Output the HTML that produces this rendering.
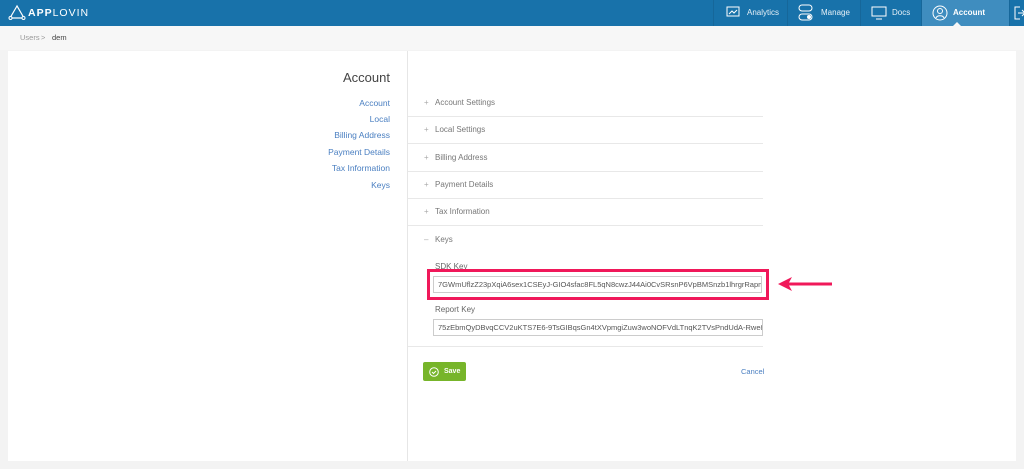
<!DOCTYPE html>
<html><head><style>
*{margin:0;padding:0;box-sizing:border-box}
body{width:1024px;height:469px;background:#f3f3f3;font-family:"Liberation Sans",sans-serif;position:relative;overflow:hidden}
.hdr{position:absolute;left:0;top:0;width:1024px;height:26px;background:#1872aa}
.logo{position:absolute;left:28px;top:7px;color:#fff;font-size:10.5px;font-weight:bold;letter-spacing:1px}
.tab{position:absolute;top:0;height:26px;color:#e6f0f7;font-size:8px;line-height:26px;border-left:1px solid #16679a}
.tab svg{position:absolute;top:6px}
.bc{position:absolute;top:26px;left:0;width:1024px;height:24px;background:#f7f7f7;font-size:7.5px;line-height:24px;color:#999}
.card{position:absolute;left:8px;top:51px;width:1008px;height:410px;background:#fff}
.vl{position:absolute;left:407px;top:51px;width:1px;height:410px;background:#e6e6e6}
.t{position:absolute;right:634px;top:70px;font-size:13px;color:#444}
.lk{position:absolute;right:634px;font-size:8.5px;color:#4a7fc1}
.row{position:absolute;left:424px;font-size:8px;color:#777}
.row b{font-weight:normal;color:#aaa;display:inline-block;width:11px}
.dv{position:absolute;left:408px;width:355px;height:1px;background:#e8e8e8}
.lab{position:absolute;left:435px;font-size:8px;color:#666}
.inp{position:absolute;left:433px;width:330px;height:17px;border:1px solid #ccc;font-size:7.5px;line-height:15px;padding-left:4px;color:#555;overflow:hidden;white-space:nowrap}
</style></head><body>
<div class="hdr">
 <svg style="position:absolute;left:8px;top:4px" width="18" height="17" viewBox="0 0 18 17"><path d="M9 2L2 14H16Z" fill="none" stroke="#fff" stroke-width="1.2"/><circle cx="2.5" cy="14" r="1.5" fill="#1872aa" stroke="#fff"/><circle cx="15.5" cy="14" r="1.5" fill="#1872aa" stroke="#fff"/></svg>
 <div class="logo">APP<span style="font-weight:normal">LOVIN</span></div>
 <div class="tab" style="left:713px;width:74px"><svg style="left:12px" width="14" height="13"><rect x="1" y="1" width="12" height="9" fill="none" stroke="#fff"/><path d="M3 8l3-3 2 2 3-3" fill="none" stroke="#fff"/></svg><span style="position:absolute;left:33px">Analytics</span></div>
 <div class="tab" style="left:787px;width:73px"><svg style="left:10px;top:4px" width="16" height="18"><rect x="1" y="1" width="13" height="6" rx="3" fill="none" stroke="#fff"/><rect x="1" y="10" width="13" height="6" rx="3" fill="none" stroke="#fff"/><circle cx="11" cy="13" r="2" fill="#fff"/></svg><span style="position:absolute;left:33px">Manage</span></div>
 <div class="tab" style="left:860px;width:61px"><svg style="left:10px" width="16" height="14"><rect x="1" y="1" width="14" height="9" fill="none" stroke="#fff"/><path d="M5 13h6" stroke="#fff"/></svg><span style="position:absolute;left:31px">Docs</span></div>
 <div class="tab" style="left:921px;width:88px;background:#3f8dbf;color:#fff;font-weight:bold"><svg style="left:10px;top:5px" width="16" height="16"><circle cx="8" cy="8" r="7" fill="none" stroke="#fff"/><circle cx="8" cy="6" r="2.5" fill="none" stroke="#fff"/><path d="M4 13c1-3 7-3 8 0" fill="none" stroke="#fff"/></svg><span style="position:absolute;left:31px">Account</span><div style="position:absolute;left:31px;top:18px;width:0;height:0;border:4px solid transparent;border-bottom-color:#f7f7f7"></div></div>
 <div class="tab" style="left:1009px;width:15px"><svg style="left:4px" width="12" height="14"><path d="M6 1H1v12h5M4 7h7M8 4l3 3-3 3" fill="none" stroke="#fff"/></svg></div>
</div>
<div class="bc"><span style="position:absolute;left:20px">Users</span><span style="position:absolute;left:41px">&gt;</span><span style="position:absolute;left:52px;color:#444">dem</span></div>
<div class="card"></div><div class="vl"></div>
<div class="t">Account</div>
<div class="lk" style="top:98px">Account</div>
<div class="lk" style="top:114px">Local</div>
<div class="lk" style="top:130px">Billing Address</div>
<div class="lk" style="top:147px">Payment Details</div>
<div class="lk" style="top:163px">Tax Information</div>
<div class="lk" style="top:180px">Keys</div>
<div class="row" style="top:98px"><b>+</b>Account Settings</div><div class="dv" style="top:116px"></div>
<div class="row" style="top:125px"><b>+</b>Local Settings</div><div class="dv" style="top:143px"></div>
<div class="row" style="top:153px"><b>+</b>Billing Address</div><div class="dv" style="top:171px"></div>
<div class="row" style="top:180px"><b>+</b>Payment Details</div><div class="dv" style="top:198px"></div>
<div class="row" style="top:207px"><b>+</b>Tax Information</div><div class="dv" style="top:225px"></div>
<div class="row" style="top:235px"><b>–</b>Keys</div>
<div class="lab" style="top:262px">SDK Key</div>
<div style="position:absolute;left:427px;top:269px;width:342px;height:31px;border:3px solid #f0185a"></div>
<div class="inp" style="top:276px;width:329px">7GWmUflzZ23pXqiA6sex1CSEyJ-GIO4sfac8FL5qN8cwzJ44Ai0CvSRsnP6VpBMSnzb1lhrgrRapmftwf</div>
<svg style="position:absolute;left:777px;top:276px" width="56" height="16"><path d="M1 8L15 1 12 6.5H55V9.5H12L15 15Z" fill="#f0185a"/></svg>
<div class="lab" style="top:305px">Report Key</div>
<div class="inp" style="top:319px">75zEbmQyDBvqCCV2uKTS7E6-9TsGIBqsGn4tXVpmgiZuw3woNOFVdLTnqK2TVsPndUdA-Rwe8UX2</div>
<div class="dv" style="top:346px"></div>
<div style="position:absolute;left:423px;top:362px;width:43px;height:19px;background:#77b52a;border-radius:2px;color:#fff;font-size:7px;font-weight:bold;line-height:19px"><svg style="position:absolute;left:6px;top:5px" width="10" height="10"><circle cx="5" cy="5" r="4.3" fill="none" stroke="#fff"/><path d="M3 5l1.5 1.5L7 4" fill="none" stroke="#fff"/></svg><span style="position:absolute;left:21px;top:0">Save</span></div>
<div style="position:absolute;left:741px;top:367px;font-size:7.5px;color:#4a7fc1">Cancel</div>
</body></html>
